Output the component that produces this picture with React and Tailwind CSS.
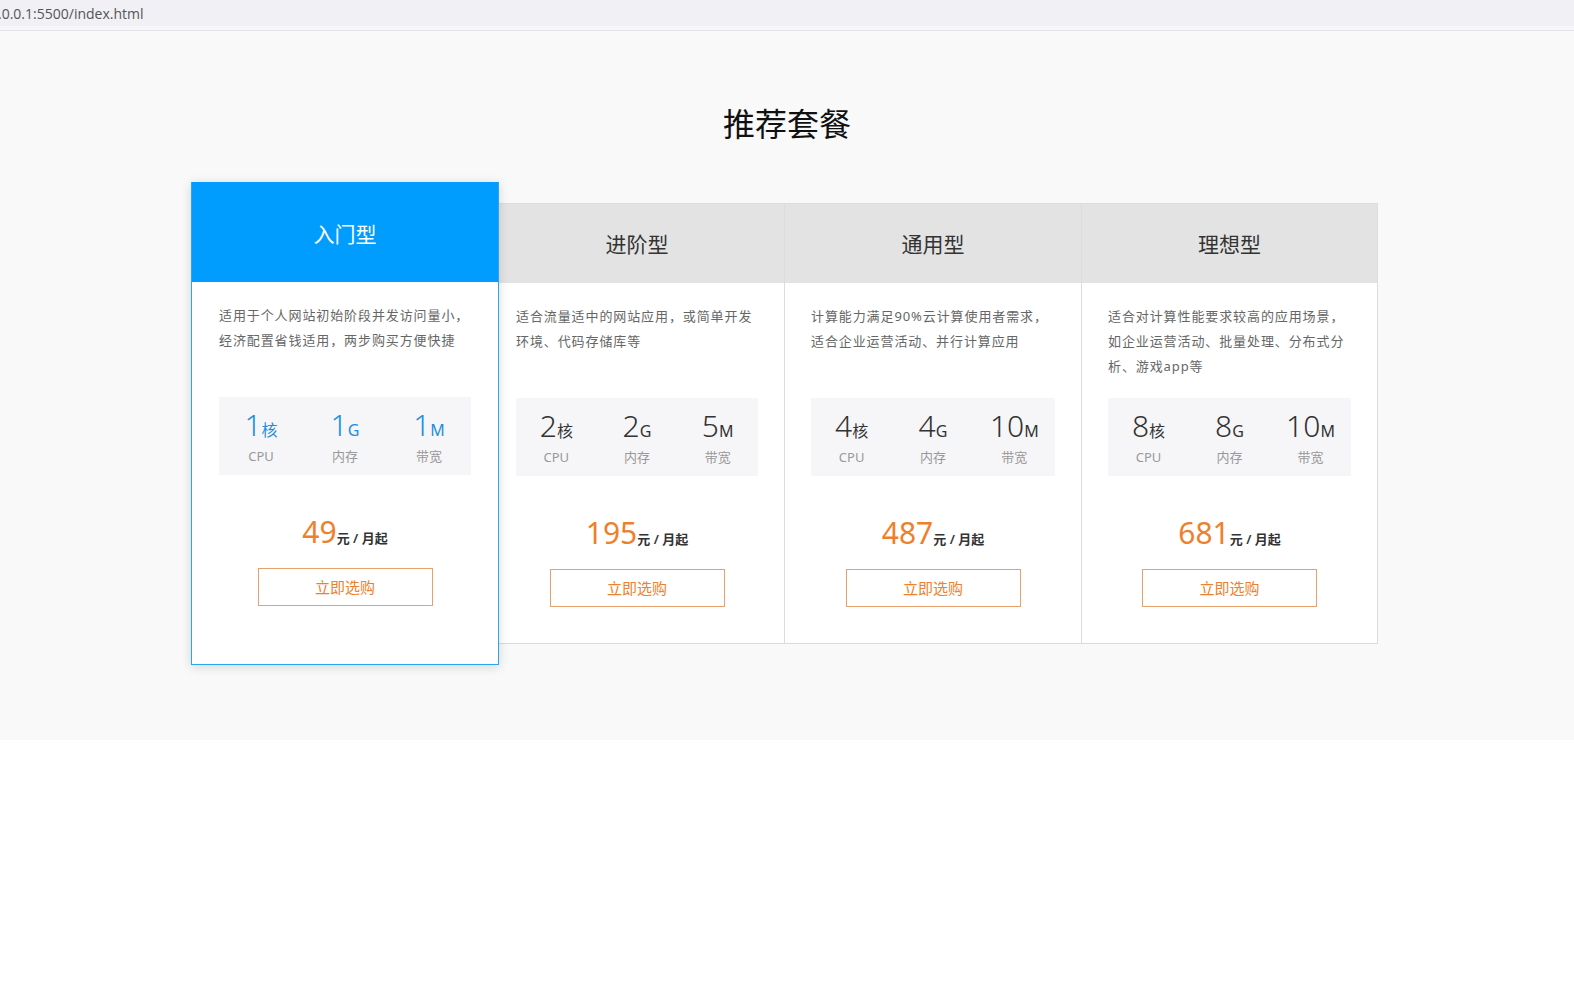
import React from "react";

const plans = [
  {
    name: "入门型",
    desc: "适用于个人网站初始阶段并发访问量小，经济配置省钱适用，两步购买方便快捷",
    cpu: 1,
    mem: 1,
    band: 1,
    price: 49,
    active: true,
  },
  {
    name: "进阶型",
    desc: "适合流量适中的网站应用，或简单开发环境、代码存储库等",
    cpu: 2,
    mem: 2,
    band: 5,
    price: 195,
  },
  {
    name: "通用型",
    desc: "计算能力满足90%云计算使用者需求，适合企业运营活动、并行计算应用",
    cpu: 4,
    mem: 4,
    band: 10,
    price: 487,
  },
  {
    name: "理想型",
    desc: "适合对计算性能要求较高的应用场景，如企业运营活动、批量处理、分布式分析、游戏app等",
    cpu: 8,
    mem: 8,
    band: 10,
    price: 681,
  },
];

const font = {
  fontFamily: '"Noto Sans", "Noto Sans CJK SC", sans-serif',
};

const widths = ["w-[308px]", "w-[296px]", "w-[297px]", "w-[296px]"];

const Spec = ({ value, unit, label, active }) => (
  <div className="flex flex-col items-center">
    <p className={`leading-[34px] ${active ? "text-[#1a8fe0]" : "text-[#333]"}`}>
      <span className="text-[30px] font-light">{value}</span>
      <span className="text-[16px]">{unit}</span>
    </p>
    <p className="text-[13px] leading-[18px] text-[#999]">{label}</p>
  </div>
);

const PlanCard = ({ plan, index }) => {
  const active = plan.active;

  return (
    <div
      className={`flex flex-col shrink-0 bg-white ${widths[index]} ${
        active
          ? "h-[483px] border border-[#2aa6f0] shadow-[0_2px_10px_rgba(0,0,0,0.15)] relative z-10"
          : "h-[441px] border border-[#dcdcdc]"
      } ${index === 1 ? "-ml-[10px]" : ""} ${index > 1 ? "border-l-0" : ""}`}
    >
      {/* Header */}
      <div
        className={`flex items-center justify-center ${
          active
            ? "h-[100px] bg-[#009dff] text-white -mt-px pt-[6px]"
            : "h-[79px] bg-[#e3e3e3] text-[#333] pt-[2px]"
        }`}
      >
        <h3 className="text-[21px]">{plan.name}</h3>
      </div>

      {/* Body */}
      <div className={`flex flex-col ${active ? "px-[27px]" : "px-[26px]"} pt-[21px]`}>
        <p className="h-[94px] text-[13px] tracking-[0.9px] leading-[25px] text-[#666]">{plan.desc}</p>

        <div className="h-[78px] bg-[#f6f6f8] grid grid-cols-3 items-center">
          <Spec value={plan.cpu} unit="核" label="CPU" active={active} />
          <Spec value={plan.mem} unit="G" label="内存" active={active} />
          <Spec value={plan.band} unit="M" label="带宽" active={active} />
        </div>

        <p className="mt-[34px] h-[36px] flex items-baseline justify-center">
          <span className="text-[30px] text-[#ef7f2b]">{plan.price}</span>
          <span className="text-[13px] font-semibold text-[#333]">元 / 月起</span>
        </p>

        <button className="mt-[23px] mx-auto w-[175px] h-[38px] border border-[#e8a06a] text-[15px] text-[#ef7f2b] bg-white">
          立即选购
        </button>
      </div>
    </div>
  );
};

export default function App() {
  return (
    <div className="min-h-screen bg-white" style={font}>
      {/* Browser address strip */}
      <div className="h-[26px] bg-[#f0f0f5] flex items-center">
        <span
          className="text-[14px] text-[#555] -ml-[2px]"
          style={{ fontFamily: '"Open Sans", "Noto Sans", sans-serif' }}
        >
          .0.0.1:5500/index.html
        </span>
      </div>
      <div className="h-[5px] bg-[#f7f7fa] border-b border-[#e2e2e8]" />

      {/* Pricing section */}
      <section className="bg-[#f9f9f9] h-[709px] pt-[71px]">
        <h2 className="text-center text-[32px] leading-[44px] text-[#111]">推荐套餐</h2>

        <div className="mt-[36px] flex items-center justify-center pr-[5px]">
          {plans.map((plan, i) => (
            <PlanCard key={i} plan={plan} index={i} />
          ))}
        </div>
      </section>
    </div>
  );
}
